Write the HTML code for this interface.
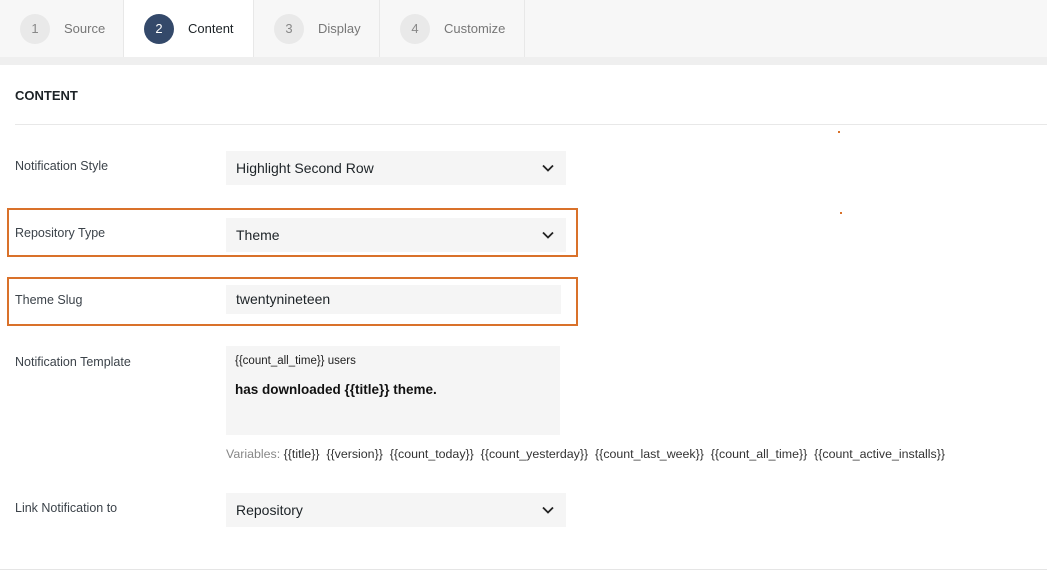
<!DOCTYPE html>
<html><head><style>
*{box-sizing:border-box;margin:0;padding:0}
body{width:1047px;height:571px;background:#fff;font-family:"Liberation Sans",sans-serif;position:relative;overflow:hidden;color:#23282d}
.top{position:absolute;left:0;top:0;width:1047px;height:57px;background:#f7f7f7}
.band{position:absolute;left:0;top:57px;width:1047px;height:8px;background:#efefef}
.tab{position:absolute;top:0;height:57px;border-right:1px solid #e8e8e8;display:flex;align-items:center;font-size:13px;color:#777}
.num{width:30px;height:30px;border-radius:50%;background:#e9e9e9;color:#888;display:flex;align-items:center;justify-content:center;font-size:13px;margin-right:14px}
.abs{position:absolute}
.lbl{position:absolute;left:15px;font-size:12.5px;color:#3c434a}
.sel{position:absolute;left:226px;width:340px;height:34px;background:#f5f5f5;font-size:14px;color:#1d2327;padding-left:10px;line-height:34px}
.sel svg{position:absolute;right:12px;top:13px}
.ob{position:absolute;left:7px;width:571px;height:49px;border:2px solid #d9712a}
.var{position:absolute;left:226px;top:447px;font-size:12.4px;color:#333;white-space:nowrap}
</style></head><body>
<div class="top"></div>
<div class="tab" style="left:0;width:124px;padding-left:20px"><div class="num">1</div>Source</div>
<div class="tab" style="left:124px;width:130px;padding-left:20px;background:#fff;color:#1d2327"><div class="num" style="background:#34496a;color:#fff">2</div>Content</div>
<div class="tab" style="left:254px;width:126px;padding-left:20px"><div class="num">3</div>Display</div>
<div class="tab" style="left:380px;width:145px;padding-left:20px"><div class="num">4</div>Customize</div>
<div class="band"></div>
<div class="abs" style="left:15px;top:88px;font-size:13px;font-weight:bold;color:#1d2327">CONTENT</div>
<div class="abs" style="left:15px;top:124px;width:1032px;height:1px;background:#e8e8e8"></div>
<div class="abs" style="left:838px;top:131px;width:2px;height:2px;background:#d9712a"></div>
<div class="abs" style="left:840px;top:212px;width:2px;height:2px;background:#d9712a"></div>

<div class="lbl" style="top:159px">Notification Style</div>
<div class="sel" style="top:151px">Highlight Second Row<svg width="12" height="8" viewBox="0 0 12 8"><path d="M1 1.5l5 5 5-5" fill="none" stroke="#222" stroke-width="1.8"/></svg></div>

<div class="ob" style="top:208px"></div>
<div class="lbl" style="top:226px">Repository Type</div>
<div class="sel" style="top:218px">Theme<svg width="12" height="8" viewBox="0 0 12 8"><path d="M1 1.5l5 5 5-5" fill="none" stroke="#222" stroke-width="1.8"/></svg></div>

<div class="ob" style="top:277px"></div>
<div class="lbl" style="top:293px">Theme Slug</div>
<div class="sel" style="top:285px;width:335px;height:29px;line-height:29px">twentynineteen</div>

<div class="lbl" style="top:355px">Notification Template</div>
<div class="abs" style="left:226px;top:346px;width:334px;height:89px;background:#f5f5f5;padding:9px 9px">
<div style="font-size:11.5px;color:#222">{{count_all_time}} users</div>
<div style="font-size:13.5px;font-weight:bold;color:#111;margin-top:15px">has downloaded {{title}} theme.</div>
</div>
<div class="var"><span style="color:#888">Variables:</span> {{title}}&nbsp; {{version}}&nbsp; {{count_today}}&nbsp; {{count_yesterday}}&nbsp; {{count_last_week}}&nbsp; {{count_all_time}}&nbsp; {{count_active_installs}}</div>

<div class="lbl" style="top:501px">Link Notification to</div>
<div class="sel" style="top:493px">Repository<svg width="12" height="8" viewBox="0 0 12 8"><path d="M1 1.5l5 5 5-5" fill="none" stroke="#222" stroke-width="1.8"/></svg></div>
<div class="abs" style="left:0;top:569px;width:1047px;height:1px;background:#e5e5e5"></div>
</body></html>
